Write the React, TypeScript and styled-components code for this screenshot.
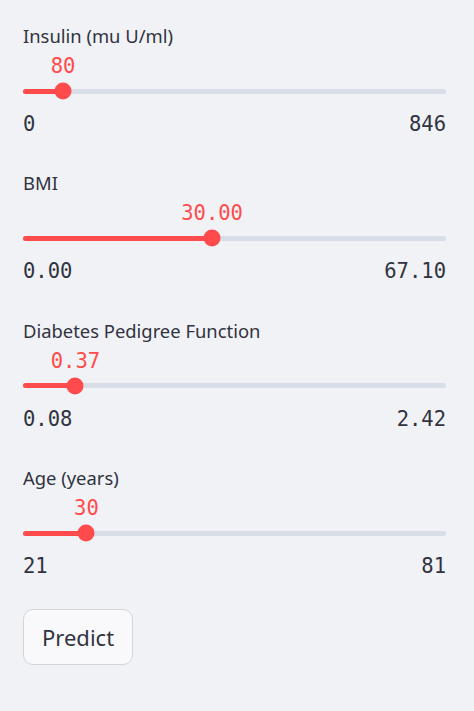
import styled, { createGlobalStyle } from 'styled-components';

interface SliderProps {
  label: string;
  min: number;
  max: number;
  value: number;
  decimals: number;
}

const fields: SliderProps[] = [
  { label: 'Insulin (mu U/ml)', min: 0, max: 846, value: 80, decimals: 0 },
  { label: 'BMI', min: 0, max: 67.1, value: 30, decimals: 2 },
  { label: 'Diabetes Pedigree Function', min: 0.08, max: 2.42, value: 0.37, decimals: 2 },
  { label: 'Age (years)', min: 21, max: 81, value: 30, decimals: 0 },
];

const GlobalStyle = createGlobalStyle`
  html, body {
    margin: 0;
    padding: 0;
    background: #f0f2f6;
  }
  body {
    min-height: 100vh;
    font-family: "Noto Sans", "Open Sans", sans-serif;
    color: #31333f;
  }
`;

const Slider: React.FC<SliderProps> = ({ label, min, max, value, decimals }) => {
  const pct = ((value - min) / (max - min)) * 100;
  return (
    <Field>
      <Label>{label}</Label>
      <TrackRow>
        <Track>
          <Fill style={{ width: `${pct}%` }} />
        </Track>
        <Thumb style={{ left: `${pct}%` }} />
        <Value style={{ left: `${pct}%` }}>{value.toFixed(decimals)}</Value>
      </TrackRow>
      <Ticks>
        <span>{min.toFixed(decimals)}</span>
        <span>{max.toFixed(decimals)}</span>
      </Ticks>
    </Field>
  );
};

export default function App() {
  return (
    <>
      <GlobalStyle />
      <Sidebar>
        {fields.map((f) => (
          <Slider key={f.label} {...f} />
        ))}
        <Button>Predict</Button>
      </Sidebar>
    </>
  );
}

const Sidebar = styled.div`
  width: 423px;
  padding: 24px 0 40px 23px;
  display: flex;
  flex-direction: column;
  gap: 36.4px;
`;

const Field = styled.div`
  display: flex;
  flex-direction: column;
`;

const Label = styled.label`
  height: 24px;
  line-height: 24px;
  font-size: 18.4px;
  color: #31333f;
  white-space: nowrap;
`;

const TrackRow = styled.div`
  position: relative;
  height: 18px;
  margin-top: 34px;
  display: flex;
  align-items: center;
`;

const Track = styled.div`
  flex: 1;
  height: 5px;
  border-radius: 3px;
  background: #d9dde8;
  overflow: hidden;
`;

const Fill = styled.div`
  height: 100%;
  background: #ff4b4b;
`;

const Thumb = styled.div`
  position: absolute;
  top: 50%;
  width: 17px;
  height: 17px;
  border-radius: 50%;
  background: #ff4b4b;
  transform: translate(-50%, -50%);
`;

const Value = styled.div`
  position: absolute;
  top: -26px;
  transform: translateX(-50%);
  font-family: "DejaVu Sans Mono", "Liberation Mono", monospace;
  font-size: 20.5px;
  line-height: 21px;
  color: #ff4b4b;
  white-space: nowrap;
`;

const Ticks = styled.div`
  margin-top: 14px;
  display: flex;
  justify-content: space-between;
  font-family: "DejaVu Sans Mono", "Liberation Mono", monospace;
  font-size: 20.5px;
  line-height: 21px;
  color: #31333f;
`;

const Button = styled.button`
  align-self: flex-start;
  margin-top: -5px;
  height: 56px;
  padding: 0 18px;
  font-family: "Noto Sans", "Open Sans", sans-serif;
  font-size: 22px;
  color: #31333f;
  background: #f9f9fb;
  border: 1px solid #d3d5da;
  border-radius: 10px;
`;
